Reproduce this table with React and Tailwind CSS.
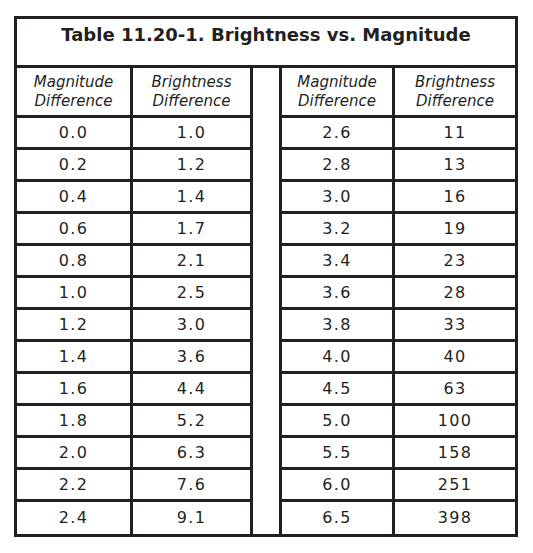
const rows = [
  ['0.0', '1.0', '2.6', '11'],
  ['0.2', '1.2', '2.8', '13'],
  ['0.4', '1.4', '3.0', '16'],
  ['0.6', '1.7', '3.2', '19'],
  ['0.8', '2.1', '3.4', '23'],
  ['1.0', '2.5', '3.6', '28'],
  ['1.2', '3.0', '3.8', '33'],
  ['1.4', '3.6', '4.0', '40'],
  ['1.6', '4.4', '4.5', '63'],
  ['1.8', '5.2', '5.0', '100'],
  ['2.0', '6.3', '5.5', '158'],
  ['2.2', '7.6', '6.0', '251'],
  ['2.4', '9.1', '6.5', '398'],
];

function Head({ w1 }) {
  return (
    <div className="flex h-[50px] border-b-[3px] border-[#231f20] italic text-[15px] leading-[19px] tracking-normal">
      <div className={`${w1} border-r-[3px] border-[#231f20] flex items-center justify-center text-center`}>
        <span>Magnitude<br />Difference</span>
      </div>
      <div className="flex-1 flex items-center justify-center text-center">
        <span>Brightness<br />Difference</span>
      </div>
    </div>
  );
}

function Half({ left, right, w1 }) {
  return (
    <div className="flex flex-col">
      {rows.map((r, i) => {
        const last = i === rows.length - 1;
        return (
          <div
            key={i}
            className={last ? 'flex h-[32px]' : 'flex h-[32px] border-b-[3px] border-[#231f20]'}
          >
            <div className={`${w1} border-r-[3px] border-[#231f20] flex items-center justify-center`}>
              {r[left]}
            </div>
            <div className="flex-1 flex items-center justify-center">{r[right]}</div>
          </div>
        );
      })}
    </div>
  );
}

export default function App() {
  return (
    <div className="w-[533px] h-[553px] bg-white pt-[16px] pl-[14px] text-[#231f20] font-['DejaVu_Sans',sans-serif]">
      <div className="w-[504px] border-[3px] border-[#231f20]">
        <div className="h-[49px] border-b-[3px] border-[#231f20] text-center font-bold text-[18px] pt-[5px] leading-[22px]">
          Table 11.20-1. Brightness vs. Magnitude
        </div>
        <div className="flex">
          <div className="w-[236px] border-r-[3px] border-[#231f20] text-[16px] tracking-[0.08em]">
            <Head w1="w-[116px]" />
            <Half left={0} right={1} w1="w-[116px]" />
          </div>
          <div className="w-[26px]"></div>
          <div className="flex-1 border-l-[3px] border-[#231f20] text-[16px] tracking-[0.08em]">
            <Head w1="w-[113px]" />
            <Half left={2} right={3} w1="w-[113px]" />
          </div>
        </div>
      </div>
    </div>
  );
}
